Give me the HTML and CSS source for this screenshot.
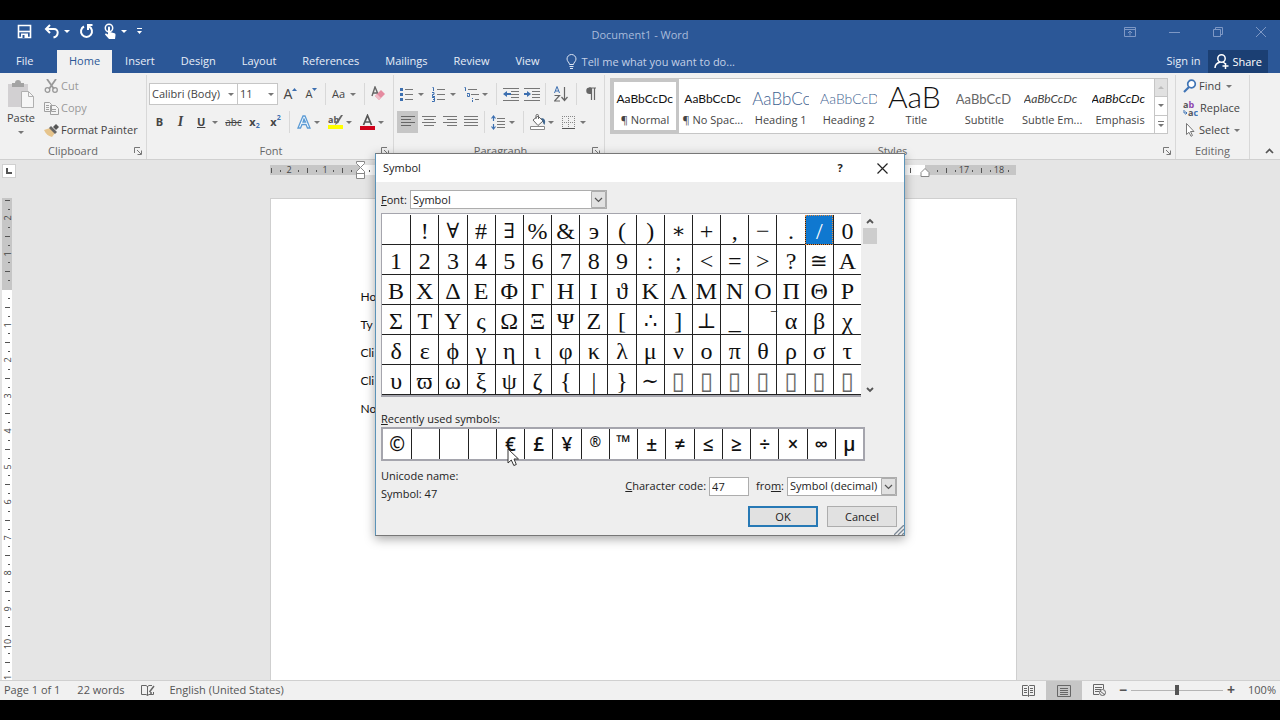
FILE: index.html
```html
<!DOCTYPE html>
<html lang="en">
<head>
  <meta charset="UTF-8" />
  <meta name="viewport" content="width=device-width, initial-scale=1.0"/>
  <title>Document1 - Word</title>
  <link rel="stylesheet" href="styles.css">
</head>
<body>

  <div class="window">
    <header class="titlebar">
      <div class="quick">
        <button class="save" aria-label="Save"><svg width="15" height="15" viewBox="0 0 15 15"><path d="M1.5 1.5h12v12h-12z" fill="none" stroke="#fff" stroke-width="1.6"/><path d="M2 7.5h11" stroke="#fff" stroke-width="1.6"/><path d="M4 9.5h7v4.5H4z" fill="#fff"/><path d="M5.5 11h2v3h-2z" fill="#2b5797"/></svg></button>
        <button class="split" aria-label="Undo"><svg width="16" height="15" viewBox="0 0 16 15"><path d="M6 1L2 5l4 4M2.500 5H10c5 0 5 7-.5 8.500" fill="none" stroke="#fff" stroke-width="2"/></svg><i class="caret"></i></button>
        <button aria-label="Repeat"><svg width="15" height="15" viewBox="0 0 15 15"><path d="M5 2.500a5.500 5.500 0 1 0 5 0" fill="none" stroke="#fff" stroke-width="2"/><path d="M8 1h5.500M9 1v5" fill="none" stroke="#fff" stroke-width="2"/></svg></button>
        <button class="split" aria-label="Touch mode"><svg width="14" height="17" viewBox="0 0 14 17"><circle cx="6" cy="5" r="3.700" fill="none" stroke="#fff" stroke-width="1.500"/><path d="M5 4.500a1 1 0 0 1 2 0V9l4.500 1.200c1 .3 1 1 1 2L12 16H6l-4-4.500c0-1 1-1.500 3 0z" fill="#fff"/></svg><i class="caret"></i></button>
        <button aria-label="Customize toolbar"><svg width="7" height="8" viewBox="0 0 7 8"><path d="M1 1.500h5" stroke="#fff"/><path d="M1 4h5L3.500 7z" fill="#fff"/></svg></button>
      </div>
      <h1>Document1 - Word</h1>
      <div class="controls">
        <button aria-label="Ribbon display options"><svg width="12" height="10" viewBox="0 0 12 10"><path d="M.5.5h11v9H.5zM.5 2.500h11M6 8.500v-4M4 6l2-2 2 2"/></svg></button>
        <button aria-label="Minimize"><svg width="11" height="10" viewBox="0 0 11 10"><path d="M0 5.500h11"/></svg></button>
        <button aria-label="Restore"><svg width="10" height="10" viewBox="0 0 10 10"><path d="M.5 2.500h7v7h-7zM2.500 2.500v-2h7v7h-2"/></svg></button>
        <button aria-label="Close"><svg width="10" height="10" viewBox="0 0 10 10"><path d="M0 0l10 10M10 0L0 10"/></svg></button>
      </div>
    </header>

    <nav class="tabs">
      <a href="#" class="file">File</a>
      <a href="#" class="active">Home</a>
      <a href="#">Insert</a>
      <a href="#">Design</a>
      <a href="#">Layout</a>
      <a href="#">References</a>
      <a href="#">Mailings</a>
      <a href="#">Review</a>
      <a href="#">View</a>
      <a href="#" class="tell"><svg width="11" height="15" viewBox="0 0 11 15"><path d="M3.500 10.500c0-2-2.500-3-2.500-5.500a4.500 4.500 0 0 1 9 0c0 2.500-2.500 3.500-2.500 5.500zM3.500 12.500h4M4 14.500h3" fill="none" stroke="#dce5f3"/></svg>Tell me what you want to do...</a>
      <a href="#" class="signin">Sign in</a>
      <button class="share"><svg width="15" height="15" viewBox="0 0 15 15"><circle cx="7.500" cy="4.500" r="3.700"/><path d="M1 14c0-3.500 2-5 5-6M9 8l2 1.500M11.500 9v6M8.500 12h6"/></svg>Share</button>
    </nav>

    <div class="ribbon">
      <section class="group clipboard">
        <div class="side">
          <button class="paste"><svg width="28" height="30" viewBox="0 0 28 30"><path d="M1 4h20v23H1z" fill="#d2d0d2"/><path d="M5 3h3a3 3 0 0 1 6 0h3v4H5z" fill="#a3a3a3"/><path d="M14.500 11.500h7l5 5v11h-12z" fill="#f6f6f6" stroke="#b0b0b0"/><path d="M21.500 11.500v5h5" fill="none" stroke="#b0b0b0"/></svg>Paste<i class="caret"></i></button>
          <div class="stack">
            <button class="dim"><svg width="15" height="15" viewBox="0 0 15 15"><path d="M3 0l7 10M12 0L5 10" stroke="#999" stroke-width="1.800"/><circle cx="3.500" cy="11" r="2.300" fill="none" stroke="#999" stroke-width="1.300"/><circle cx="11" cy="11" r="2.300" fill="none" stroke="#999" stroke-width="1.300"/></svg>Cut</button>
            <button class="dim"><svg width="15" height="15" viewBox="0 0 15 15"><path d="M.5 1.500h5l2 2v7h-7zM6.500 4.500h5l3 3v6h-8z" fill="#f4f4f4" stroke="#a0a0a0"/><path d="M2 4.500h3M2 6.500h3M2 8.500h3M8 8.500h4M8 10.500h4" stroke="#a0a0a0"/></svg>Copy</button>
            <button><svg width="15" height="15" viewBox="0 0 15 15"><path d="M0 7l6-2 5 5-3 4c-4-1-6-3-8-7z" fill="#e6c48c"/><path d="M5 5l2-2 6 6-2 2z" fill="#666"/><path d="M9 4l3-3 3 3-3 3z" fill="#555"/></svg>Format Painter</button>
          </div>
        </div>
        <h2>Clipboard<button class="launch" aria-label="Clipboard settings"><svg width="8" height="8"><use href="#launch"/></svg></button></h2>
      </section>

      <section class="group font">
        <div class="row">
          <div class="combo family"><select aria-label="Font family"><option>Calibri (Body)</option></select><i class="caret"></i></div>
          <div class="combo size"><select aria-label="Font size"><option>11</option></select><i class="caret"></i></div>
          <button aria-label="Grow font"><span class="grow">A</span><svg width="5" height="12" viewBox="0 0 5 12"><path d="M0 3l2.500-3L5 3z" fill="#3c6fb0"/></svg></button>
          <button aria-label="Shrink font"><span>A</span><svg width="5" height="12" viewBox="0 0 5 12"><path d="M0 0h5L2.500 3z" fill="#3c6fb0"/></svg></button>
          <hr>
          <button class="split" aria-label="Change case"><span>Aa</span><i class="caret"></i></button>
          <hr>
          <button aria-label="Clear formatting"><svg width="15" height="16" viewBox="0 0 15 16"><path d="M1 10l3-9 3 7M2 7h4" fill="none" stroke="#666" stroke-width="1.400"/><path d="M4 10l6-6 4 4-6 6z" fill="#e58ba0"/><path d="M4 10l2-2 4 4-2 2z" fill="#f2bcc8"/></svg></button>
        </div>
        <div class="row">
          <button class="b">B</button>
          <button class="i">I</button>
          <button class="split"><span class="u">U</span><i class="caret"></i></button>
          <button class="strike">abc</button>
          <button class="b">x<sub>2</sub></button>
          <button class="b">x<sup>2</sup></button>
          <hr>
          <button class="split" aria-label="Text effects"><svg width="16" height="16" viewBox="0 0 16 16"><path d="M2 14L7 2h2l5 12h-2.500L10 10.500H6L4.500 14zM7 8h2.500L8 5z" fill="#fff" stroke="#5b9bd5" stroke-width="1.300"/></svg><i class="caret"></i></button>
          <button class="split" aria-label="Highlight color"><svg width="16" height="16" viewBox="0 0 16 16"><path d="M0 11h15v4H0z" fill="#ff0"/><text x="0" y="9" class="tiny">ab</text><path d="M15 1l-5 8-3 2 1-3 5-7z" fill="#666"/></svg><i class="caret"></i></button>
          <button class="split" aria-label="Font color"><svg width="16" height="16" viewBox="0 0 16 16"><path d="M0 12h15v4H0z" fill="#d0021b"/><path d="M3.500 11L7.500 1.500 11.500 11M5 8h5" fill="none" stroke="#555" stroke-width="1.700"/></svg><i class="caret"></i></button>
        </div>
        <h2>Font<button class="launch" aria-label="Font settings"><svg width="8" height="8"><use href="#launch"/></svg></button></h2>
      </section>

      <section class="group paragraph">
        <div class="row">
          <button class="split" aria-label="Bullets"><svg width="14" height="15" viewBox="0 0 14 15"><path d="M5 2.500h8M5 7.500h8M5 12.500h8" stroke="#777"/><path d="M0 1h3v3H0zM0 6h3v3H0zM0 11h3v3H0z" fill="#3c6fb0"/></svg><i class="caret"></i></button>
          <button class="split" aria-label="Numbering"><svg width="14" height="15" viewBox="0 0 14 15"><path d="M5 2.500h8M5 7.500h8M5 12.500h8" stroke="#777"/><path d="M.5.5h1V4M0 5.500h2v2H.5v2H3M0 10.500h2.500v4H0M1 12.500h1" fill="none" stroke="#3c6fb0"/></svg><i class="caret"></i></button>
          <button class="split" aria-label="Multilevel list"><svg width="16" height="15" viewBox="0 0 16 15"><path d="M4 2.500h9M7 7.500h8M11 12.500h4" stroke="#777"/><path d="M.5.5h1V4M3 6.500h2.500v3H3.500v-2M8.500 11v1M8.500 13v2" fill="none" stroke="#3c6fb0"/></svg><i class="caret"></i></button>
          <hr>
          <button aria-label="Decrease indent"><svg width="16" height="14" viewBox="0 0 16 14"><path d="M0 1.500h16M8 4.500h8M8 7.500h8M8 10.500h8M0 13.500h16" stroke="#777"/><path d="M0 7l4-3v2h4v2H4v2z" fill="#3c6fb0"/></svg></button>
          <button aria-label="Increase indent"><svg width="16" height="14" viewBox="0 0 16 14"><path d="M0 1.500h16M8 4.500h8M8 7.500h8M8 10.500h8M0 13.500h16" stroke="#777"/><path d="M7 7L3 4v2H0v2h3v2z" fill="#3c6fb0"/></svg></button>
          <hr>
          <button class="wide" aria-label="Sort"><svg width="14" height="16" viewBox="0 0 14 16"><path d="M.5 7L3 .5 5.500 7M1.500 5h3" fill="none" stroke="#3c6fb0"/><path d="M.5 9.500h5l-5 5.500h5.500M10.500 1v13M7.500 11l3 3.500 3-3.500" fill="none" stroke="#666" stroke-width="1.200"/></svg></button>
          <hr>
          <button aria-label="Show marks"><svg width="10" height="14" viewBox="0 0 10 14"><path d="M5.500 13V1M8.500 13V1M3 1h7" stroke="#666" fill="none" stroke-width="1.200"/><path d="M5 .5H3.500a3 3 0 0 0 0 6.500H5z" fill="#666"/></svg></button>
        </div>
        <div class="row">
          <button class="on" aria-label="Align left"><svg width="14" height="12" viewBox="0 0 14 12"><path d="M0 .5h14M0 3.500h10M0 6.500h14M0 9.500h10" stroke="#666"/></svg></button>
          <button aria-label="Center"><svg width="14" height="12" viewBox="0 0 14 12"><path d="M0 .5h14M2 3.500h10M0 6.500h14M2 9.500h10" stroke="#777"/></svg></button>
          <button aria-label="Align right"><svg width="14" height="12" viewBox="0 0 14 12"><path d="M0 .5h14M4 3.500h10M0 6.500h14M4 9.500h10" stroke="#777"/></svg></button>
          <button aria-label="Justify"><svg width="14" height="12" viewBox="0 0 14 12"><path d="M0 .5h14M0 3.500h14M0 6.500h14M0 9.500h14" stroke="#777"/></svg></button>
          <hr>
          <button class="split" aria-label="Line spacing"><svg width="14" height="15" viewBox="0 0 14 15"><path d="M6 3.500h8M6 6.500h8M6 9.500h8M6 12.500h8" stroke="#777"/><path d="M2.500 1v5M.5 3.500l2-2.500 2 2.500M2.500 9v5M.5 11.500l2 2.500 2-2.500" fill="none" stroke="#3c6fb0" stroke-width="1.200"/></svg><i class="caret"></i></button>
          <hr>
          <button class="split" aria-label="Shading"><svg width="16" height="16" viewBox="0 0 16 16"><path d="M.5 12.500h14v3H.5z" fill="#fff" stroke="#888"/><path d="M3 6l5-4 5 5-5 4.500z" fill="#fff" stroke="#666"/><path d="M6 5V1.500c0-1.500 2.500-1.500 2.500 0V5" fill="none" stroke="#666"/><path d="M11 4c4 0 5 3 3.500 7C13 10 13 8 12.500 7z" fill="#3f668f"/></svg><i class="caret"></i></button>
          <button class="split" aria-label="Borders"><svg width="13" height="13" viewBox="0 0 13 13"><path d="M.5 0v12M12.500 0v12M0 .5h13M6.500 0v12M0 6.500h13" stroke="#888" stroke-dasharray="1 1"/><path d="M0 12.500h13" stroke="#555"/></svg><i class="caret"></i></button>
        </div>
        <h2>Paragraph<button class="launch" aria-label="Paragraph settings"><svg width="8" height="8"><use href="#launch"/></svg></button></h2>
      </section>

      <section class="group styles">
        <div class="gallery">
          <button class="style current"><span class="sample">AaBbCcDc</span><span>¶ Normal</span></button>
          <button class="style"><span class="sample">AaBbCcDc</span><span>¶ No Spac...</span></button>
          <button class="style"><span class="sample h1">AaBbCc</span><span>Heading 1</span></button>
          <button class="style"><span class="sample h2">AaBbCcD</span><span>Heading 2</span></button>
          <button class="style"><span class="sample title">AaB</span><span>Title</span></button>
          <button class="style"><span class="sample subtitle">AaBbCcD</span><span>Subtitle</span></button>
          <button class="style"><span class="sample subtle">AaBbCcDc</span><span>Subtle Em...</span></button>
          <button class="style"><span class="sample emphasis">AaBbCcDc</span><span>Emphasis</span></button>
          <div class="pager">
            <button class="off" aria-label="Previous styles"><i class="caret up"></i></button>
            <button aria-label="Next styles"><i class="caret"></i></button>
            <button class="more" aria-label="More styles"><i class="caret"></i></button>
          </div>
        </div>
        <h2>Styles<button class="launch" aria-label="Styles pane"><svg width="8" height="8"><use href="#launch"/></svg></button></h2>
      </section>

      <section class="group editing">
        <div class="stack">
          <button><svg width="14" height="14" viewBox="0 0 14 14"><circle cx="8.500" cy="5" r="3.800" fill="#fff" stroke="#3f74b5" stroke-width="1.700"/><path d="M6 8l-5 5" stroke="#3f74b5" stroke-width="2.200"/></svg>Find<i class="caret"></i></button>
          <button><svg width="15" height="15" viewBox="0 0 15 15"><text x="0" y="7" class="tiny">a<tspan class="purple">b</tspan></text><text x="5" y="15" class="tiny">a<tspan class="blue">c</tspan></text><path d="M1 9v3h3M2.500 10.500L4 12l-1.500 1.500" fill="none" stroke="#3f74b5"/></svg>Replace</button>
          <button><svg width="14" height="14" viewBox="0 0 14 14"><path d="M3.500.5v11l2.500-2.200 2 4 1.500-.8-2-4H11z" fill="#fff" stroke="#777"/></svg>Select<i class="caret"></i></button>
        </div>
        <h2>Editing</h2>
      </section>
      <button class="collapse" aria-label="Collapse the ribbon"><svg width="9" height="6" viewBox="0 0 9 6"><path d="M1 5l3.500-3.500L8 5" fill="none" stroke="#555" stroke-width="1.700"/></svg></button>
    </div>

    <main class="workspace">
      <div class="topruler">
        <button class="tabstop" aria-label="Tab stop"><svg width="7" height="6" viewBox="0 0 7 6"><path d="M1 0v5h5" fill="none" stroke="#555" stroke-width="2"/></svg></button>
        <svg class="hruler" id="hruler" width="746" height="18"></svg>
      </div>
      <div class="editor">
        <svg class="vruler" id="vruler" width="10"></svg>
        <article class="page">
          <p>Ho</p>
          <p>Ty</p>
          <p>Cli</p>
          <p>Cli</p>
          <p>No</p>
        </article>
      </div>
    </main>

    <footer class="status">
      <span>Page 1 of 1</span>
      <span>22 words</span>
      <button aria-label="Proofing"><svg width="14" height="13" viewBox="0 0 14 13"><path d="M6.500 11.500L5 10.500H.5v-9H5l1.500 1 1.500-1h3M6.500 2v9.500l1.500-1h4.500V8" fill="none" stroke="#666"/><path d="M13 2L8.500 8M9 9h2" stroke="#666" stroke-width="1.500"/></svg></button>
      <span>English (United States)</span>
      <div class="views">
        <button aria-label="Read mode"><svg width="13" height="12" viewBox="0 0 13 12"><path d="M6.500 11.500V1.500l-1-1h-5v10h5l1 1 1-1h5V.5h-5l-1 1M2 3.500h3M2 5.500h3M2 7.500h3M8 3.500h3M8 5.500h3M8 7.500h3" fill="none" stroke="#666"/></svg></button>
        <button class="on" aria-label="Print layout"><svg width="14" height="12" viewBox="0 0 14 12"><path d="M.5.5h13v11H.5zM3 3.500h8M3 5.500h8M3 7.500h8M3 9.500h8" fill="none" stroke="#666"/></svg></button>
        <button aria-label="Web layout"><svg width="14" height="13" viewBox="0 0 14 13"><path d="M6 10.500H.5V.5h10V5M2 3.500h7M2 5.500h6M2 7.500h4" fill="none" stroke="#666"/><circle cx="9.500" cy="8.500" r="3" fill="#eee" stroke="#666"/><path d="M7 7l5 4" stroke="#666"/></svg></button>
      </div>
      <div class="zoom">
        <button aria-label="Zoom out">−</button>
        <input type="range" min="10" max="190" value="100" aria-label="Zoom">
        <button aria-label="Zoom in">+</button>
      </div>
      <span class="percent">100%</span>
    </footer>

    <div class="dialog" role="dialog" aria-labelledby="dialogTitle">
      <div class="dialog-title">
        <h2 id="dialogTitle">Symbol</h2>
        <button aria-label="Help">?</button>
        <button aria-label="Close dialog"><svg width="11" height="11" viewBox="0 0 11 11"><path d="M.5.5l10 10M10.500.5l-10 10" stroke="#222" stroke-width="1.200"/></svg></button>
      </div>
      <div class="dialog-body">
        <div class="field">
          <label for="symbolFont"><u>F</u>ont:</label>
          <div class="picker fontpick"><select id="symbolFont"><option>Symbol</option></select><svg width="15" height="17" viewBox="0 0 15 17"><use href="#drop"/></svg></div>
        </div>
        <div class="symbols">
          <div class="grid" id="symbolGrid"></div>
          <div class="scroll">
            <button aria-label="Scroll up"><svg width="8" height="6" viewBox="0 0 8 6"><path d="M1 5l3-3 3 3" fill="none" stroke="#555" stroke-width="1.800"/></svg></button>
            <div class="thumb"></div>
            <button aria-label="Scroll down"><svg width="8" height="6" viewBox="0 0 8 6"><path d="M1 1l3 3 3-3" fill="none" stroke="#555" stroke-width="1.800"/></svg></button>
          </div>
        </div>
        <p class="recent-label"><u>R</u>ecently used symbols:</p>
        <div class="recent" id="recentGrid"></div>
        <div class="details">
          <div class="names">
            <p>Unicode name:</p>
            <p>Symbol: 47</p>
          </div>
          <div class="field">
            <label for="charCode"><u>C</u>haracter code:</label>
            <input type="text" id="charCode" value="47">
            <label for="charFrom" class="from">fro<u>m</u>:</label>
            <div class="picker frompick"><select id="charFrom"><option>Symbol (decimal)</option></select><svg width="15" height="17" viewBox="0 0 15 17"><use href="#drop"/></svg></div>
          </div>
        </div>
        <div class="actions">
          <button class="default">OK</button>
          <button>Cancel</button>
        </div>
      </div>
      <svg class="grip" width="10" height="10" viewBox="0 0 10 10"><path d="M0 10L10 0M4 10l6-6M8 10l2-2" stroke="#7b8794" stroke-width="1.300"/></svg>
      <svg class="pointer" width="13" height="19" viewBox="0 0 13 19"><path d="M1 1v14l3.300-3 2.500 5.500 2.500-1L7 11h4.500z" fill="#fff" stroke="#333"/></svg>
    </div>
  </div>

  <!-- shared shapes -->
  <svg class="defs" width="0" height="0">
    <symbol id="launch" viewBox="0 0 8 8"><path d="M.5 6V.5H6M3 3l4 4M7.500 3.500v4h-4" fill="none" stroke="#777"/></symbol>
    <symbol id="drop" viewBox="0 0 15 17"><path d="M.5.5h14v16H.5z" fill="#e1e1e1" stroke="#adadad"/><path d="M4 7l3.500 3.500L11 7" fill="none" stroke="#555" stroke-width="1.200"/></symbol>
  </svg>

  <script>
    const rows = [
      " !∀#∃%&э()∗+,−./0",
      "123456789:;<=>?≅Α",
      "ΒΧΔΕΦΓΗΙϑΚΛΜΝΟΠΘΡ",
      "ΣΤΥςΩΞΨΖ[∴]⊥_‾αβχ",
      "δεϕγηιφκλμνοπθρστ",
      "υϖωξψζ{|}∼▯▯▯▯▯▯▯"
    ];
    const recent = ["©", " ", " ", " ", "€", "£", "¥", "®", "™", "±", "≠", "≤", "≥", "÷", "×", "∞", "µ"];

    function addCell(parent, char) {
      const cell = document.createElement('button');
      cell.textContent = char;
      if (char === ' ') cell.setAttribute('aria-label', 'Space');
      if (char === '/') cell.className = 'selected';
      if (char === '‾') cell.className = 'over';
      if ('∀∃∗∴⊥≅∼'.includes(char)) cell.className = 'math';
      if ('®™'.includes(char)) cell.className = 'mark';
      if (char === '▯') cell.className = 'blank';
      parent.appendChild(cell);
    }

    rows.forEach(row => [...row].forEach(c => addCell(document.getElementById('symbolGrid'), c)));
    recent.forEach(c => addCell(document.getElementById('recentGrid'), c));

    // Ruler marks: a number every centimetre, a bar at the half, dots at the quarters
    function drawRuler(id, zero, length, margin, end, vertical) {
      const cm = 35.5;
      let out = vertical
        ? `<rect width="10" height="${length}" fill="#fff"/><rect width="10" height="${margin}" fill="#c6c6c6"/>`
        : `<rect y="4" width="${length}" height="10" fill="#fff"/><rect y="4" width="${margin}" height="10" fill="#c6c6c6"/><rect x="${end}" y="4" width="${length - end}" height="10" fill="#c6c6c6"/>`;
      for (let q = -10; q < 80; q++) {
        const pos = Math.round(zero + q * cm / 4);
        if (pos < 1 || pos > length - 2 || q === 0) continue;
        // the right indent marker sits here
        if (!vertical && Math.abs(pos - end) < 7) continue;
        const size = q % 2 ? 1 : 4;
        if (q % 4 === 0) {
          const n = Math.abs(q / 4);
          out += vertical
            ? `<text transform="translate(9 ${pos}) rotate(-90)">${n}</text>`
            : `<text x="${pos}" y="12">${n}</text>`;
        } else {
          out += vertical
            ? `<rect x="${7 - size}" y="${pos}" width="${size + 1}" height="1" fill="#555"/>`
            : `<rect x="${pos}" y="${q % 2 ? 9 : 7}" width="1" height="${size + 1}" fill="#555"/>`;
        }
      }
      if (!vertical) {
        out += `<path d="M86.500.5h8v2l-4 4 4 4v7h-8v-7l4-4-4-4zM86.500 12.500h8" fill="#fff" stroke="#888"/>
                <path d="M${end - 4} 15.500v-4l4-4 4 4v4z" fill="#fff" stroke="#888"/>`;
      }
      document.getElementById(id).innerHTML = out;
    }

    drawRuler('hruler', 90, 746, 90, 655, false);
    drawRuler('vruler', 91, 1200, 92, 0, true);
  </script>

</body>
</html>
```

FILE: styles.css
```css
* {
  box-sizing: border-box;
}

body {
  margin: 0;
  background-color: #000;
  color: #444;
  font-family: "Open Sans", "Noto Sans", sans-serif;
  font-size: 11px;
  line-height: 16px;
}

h1, h2, p {
  margin: 0;
  font-size: 11px;
  font-weight: normal;
}

button, input, select {
  font: inherit;
  color: inherit;
  margin: 0;
  padding: 0;
  border: none;
  background: none;
}

svg {
  display: block;
  flex: none;
}

.defs {
  position: absolute;
}

.window {
  position: relative;
  display: flex;
  flex-direction: column;
  height: calc(100vh - 40px);
  margin: 20px 0;
  background-color: #e5e5e5;
  overflow: hidden;
}

.caret {
  flex: none;
  width: 5px;
  border: solid transparent;
  border-width: 3px 3px 0;
  border-top-color: #777;
}

.caret.up {
  border-width: 0 3px 3px;
  border-bottom-color: #bbb;
}

.tiny {
  font-size: 9px;
  font-weight: bold;
  fill: #555;
}

.purple {
  fill: #8e44ad;
}

.blue {
  fill: #3f74b5;
}

/* Title bar */
.titlebar {
  display: grid;
  grid-template-columns: 1fr auto 1fr;
  align-items: center;
  height: 30px;
  background-color: #2b5797;
}

.titlebar .caret {
  border-top-color: #fff;
}

.titlebar h1 {
  color: #a9bbda;
}

.quick {
  display: flex;
  align-items: center;
  padding: 0 0 8px 17px;
  gap: 9px;
}

.quick .save {
  margin-right: 3px;
}

.quick .split {
  gap: 4px;
}

.quick button {
  display: flex;
  align-items: center;
}

.controls {
  display: flex;
  justify-content: flex-end;
  gap: 33px;
  padding: 0 14px 7px 0;
}

.controls svg {
  fill: none;
  stroke: #7e98c5;
}

/* Tabs */
.tabs {
  display: flex;
  height: 23px;
  background-color: #2b5797;
}

.tabs a {
  color: #e8eef7;
  text-decoration: none;
  line-height: 22px;
  padding: 0 13px;
}

.tabs .file {
  width: 57px;
  padding: 0 0 0 16px;
}

.tabs .active {
  padding: 0 12px;
  background-color: #f1f1f1;
  color: #2b5797;
}

.tabs .tell {
  display: flex;
  align-items: center;
  gap: 5px;
  color: #c3d0e6;
}

.tabs .signin {
  margin-left: auto;
  padding: 0 8px;
}

.share {
  display: flex;
  align-items: center;
  gap: 3px;
  margin-right: 12px;
  padding: 0 6px;
  color: #fff;
  background-color: #1b3f73;
}

.share svg {
  fill: none;
  stroke: #fff;
  stroke-width: 1.5;
}

/* Ribbon */
.ribbon {
  display: flex;
  height: 87px;
  padding: 2px 0 0;
  background-color: #f1f1f1;
  border-bottom: 1px solid #d0d0d0;
}

.group {
  display: flex;
  flex-direction: column;
  border-right: 1px solid #d8d8d8;
}

.group h2 {
  display: flex;
  margin-top: auto;
  height: 16px;
  justify-content: center;
  align-items: center;
  color: #666;
}

.launch {
  width: 0;
  margin-left: auto;
  direction: rtl;
}

.group h2:has(.launch)::before {
  content: "";
  margin-right: auto;
}

.launch svg {
  margin-right: 4px;
}

.clipboard {
  width: 147px;
}

.side {
  display: flex;
}

.paste {
  display: flex;
  flex-direction: column;
  align-items: center;
  width: 42px;
  padding-top: 5px;
}

.paste .caret {
  margin-top: 5px;
}

.stack button {
  display: flex;
  align-items: center;
  gap: 2px;
  height: 22px;
  padding-left: 2px;
  white-space: nowrap;
}

.stack .dim {
  color: #999;
}

.row {
  display: flex;
  margin-bottom: 6px;
  height: 22px;
}

.row:first-child {
  margin-top: 8px;
}

.row hr {
  width: 1px;
  margin: 0 3px;
  border: none;
  background-color: #d8d8d8;
}

.row button {
  display: flex;
  align-items: center;
  justify-content: center;
  flex: none;
  width: 21px;
}

.row .split {
  width: 32px;
  justify-content: space-between;
  padding: 0 5px 0 3px;
}

.row .wide {
  width: 24px;
}

.row .on {
  background-color: #c6c6c6;
}

.row .b {
  font-weight: bold;
}

.row .i {
  font: italic bold 14px "Liberation Serif", serif;
}

.row .u {
  font-weight: bold;
  text-decoration: underline;
  padding-left: 3px;
}

.row .strike {
  font-size: 10px;
  text-decoration: line-through;
}

.row sub, .row sup {
  font-size: 7px;
  line-height: 8px;
  color: #3c6fb0;
}

.row sub {
  padding-top: 8px;
}

.row sup {
  padding-bottom: 8px;
}

.grow {
  font-size: 14px;
}

.font {
  width: 247px;
  padding-left: 2px;
}

.combo {
  display: grid;
  align-items: center;
  background-color: #fff;
  border: 1px solid #c6c6c6;
}

.combo select, .combo .caret {
  grid-area: 1 / 1;
}

.combo .caret {
  justify-self: end;
  margin-right: 3px;
}

.combo select, .picker select {
  appearance: none;
  width: 100%;
  padding-left: 2px;
  outline: none;
}

.family {
  width: 89px;
}

.size {
  width: 40px;
  border-left: none;
  margin-right: 2px;
}

.paragraph {
  width: 211px;
  padding-left: 3px;
}

.styles {
  flex: 1;
  min-width: 0;
  padding-left: 5px;
}

.gallery {
  display: flex;
  height: 56px;
  margin: 3px 7px 0 0;
  background-color: #fff;
  border: 1px solid #c6c6c6;
}

.style {
  display: flex;
  flex: 1;
  flex-direction: column;
  align-items: center;
  justify-content: flex-end;
  min-width: 0;
  padding: 2px;
  border: 3px solid transparent;
  white-space: nowrap;
}

.style.current {
  border-color: #c6c6c6;
}

.sample {
  width: 57px;
  height: 30px;
  line-height: 30px;
  overflow: hidden;
  text-align: left;
  color: #111;
  font-family: Lato, sans-serif;
  font-size: 12px;
}

.h1, .h2 {
  color: #3f6391;
}

.h1 {
  font-size: 17px;
  font-weight: 300;
}

.h2 {
  font-size: 14px;
  font-weight: 300;
}

.title {
  font-size: 30px;
  font-weight: 300;
  line-height: 24px;
}

.subtitle {
  color: #666;
  font-size: 13px;
}

.subtle, .emphasis {
  font-style: italic;
}

.subtle {
  color: #444;
}

.pager {
  display: flex;
  flex-direction: column;
  width: 13px;
  border-left: 1px solid #c6c6c6;
}

.pager button {
  display: flex;
  flex: 1;
  flex-direction: column;
  align-items: center;
  justify-content: center;
}

.pager button + button {
  border-top: 1px solid #c6c6c6;
}

.pager .off {
  background-color: #e1e1e1;
}

.pager .more::before {
  content: "";
  width: 6px;
  margin-bottom: 2px;
  border-top: 1px solid #777;
}

.editing {
  width: 74px;
}

.editing .stack {
  padding-left: 5px;
}

.editing .caret {
  margin-left: 3px;
}

.collapse {
  align-self: flex-end;
  width: 30px;
  height: 16px;
  padding: 0 0 0 15px;
}

/* Rulers and page */
.workspace {
  display: flex;
  flex: 1;
  flex-direction: column;
  min-height: 0;
}

.topruler {
  display: flex;
  padding: 1px 10px 0 2px;
}

.tabstop {
  display: flex;
  align-items: center;
  justify-content: center;
  width: 14px;
  height: 14px;
  margin-top: 3px;
  background-color: #fff;
  border: 1px solid #d0d0d0;
}

.hruler {
  margin: 0 auto;
  font-size: 9px;
  text-anchor: middle;
  fill: #444;
}

.vruler {
  height: 100%;
  font-size: 9px;
  text-anchor: middle;
  fill: #444;
}

.editor {
  display: flex;
  flex: 1;
  min-height: 0;
  padding: 19px 6px 0 2px;
}

.page {
  width: 747px;
  height: 100%;
  margin: 0 auto;
  padding: 84px 90px 0;
  background-color: #fff;
  border: 1px solid #cfcfcf;
  border-bottom: none;
  font: 12px/28px Lato, sans-serif;
  color: #111;
}

.page p {
  font-size: 12px;
}

/* Status bar */
.status {
  display: flex;
  align-items: center;
  gap: 17px;
  height: 20px;
  padding: 0 4px 1px;
  background-color: #f1f1f1;
  border-top: 1px solid #d0d0d0;
  color: #555;
}

.status button + span {
  margin-left: -3px;
}

.views {
  display: flex;
  align-self: stretch;
  margin: 0 -16px -1px auto;
}

.views button {
  display: flex;
  align-items: center;
  justify-content: center;
  width: 36px;
}

.views .on {
  background-color: #c6c6c6;
}

.zoom {
  display: flex;
  align-items: center;
  gap: 4px;
}

.zoom button {
  width: 8px;
  font-size: 14px;
  font-weight: bold;
}

.zoom input {
  appearance: none;
  width: 92px;
  height: 10px;
  background: linear-gradient(#b5b5b5, #b5b5b5) center / 100% 1px no-repeat;
}

.zoom input::-webkit-slider-thumb {
  appearance: none;
  width: 4px;
  height: 10px;
  background-color: #555;
}

.percent {
  margin-left: -4px;
}

/* Symbol dialog */
.dialog {
  position: absolute;
  top: 133px;
  left: 50%;
  width: 530px;
  transform: translateX(-50%);
  background-color: #eee;
  border: 1px solid #5b93b8;
  border-top-color: #777;
  border-bottom-color: #777;
  box-shadow: 0 3px 10px rgba(0,0,0,0.35);
  color: #222;
}

.dialog-title {
  display: flex;
  align-items: center;
  height: 28px;
  padding: 0 1px 0 7px;
  background-color: #fff;
}

.dialog-title h2 {
  margin-right: auto;
}

.dialog-title button {
  display: flex;
  align-items: center;
  justify-content: center;
  width: 42px;
  height: 28px;
  font-weight: bold;
}

.dialog-body {
  padding: 8px 7px 8px 5px;
}

.field {
  display: flex;
  align-items: center;
  gap: 3px;
}

.picker {
  display: grid;
  align-items: center;
  background-color: #fff;
  border: 1px solid #adadad;
}

.picker select, .picker svg {
  grid-area: 1 / 1;
}

.picker svg {
  justify-self: end;
}

.picker select {
  height: 17px;
}

.fontpick {
  width: 197px;
}

.frompick {
  width: 110px;
}

.symbols {
  display: flex;
  margin-top: 4px;
}

.grid, .recent {
  display: grid;
  grid-template-columns: repeat(17, 1fr);
  background-color: #fff;
  border: 1px solid #a5a5ad;
}

.grid {
  width: 480px;
  grid-auto-rows: 30px;
  padding: 1px 0 0;
  border-right: none;
  border-bottom: 2px solid #a5a5ad;
}

.grid button {
  min-width: 0;
  padding-top: 4px;
  border: solid #222;
  border-width: 0 0 1px 1px;
  font: 24px/25px "Liberation Serif", "DejaVu Serif", serif;
  color: #111;
}

.grid button:nth-child(17n + 1) {
  border-left: none;
}

.grid .math {
  font-size: 21px;
}

.grid .blank {
  font-size: 24px;
  font-family: "DejaVu Sans", sans-serif;
  color: #666;
}

.grid .over {
  padding: 0;
  text-align: right;
  font-size: 16px;
}

.grid .selected {
  background-color: #0f78d0;
  color: #fff;
  outline: 1px dotted #e38b40;
  outline-offset: -1px;
}

.scroll {
  display: flex;
  flex-direction: column;
  align-items: center;
  width: 18px;
}

.scroll button {
  display: flex;
  align-items: center;
  justify-content: center;
  width: 15px;
  height: 15px;
}

.scroll button:last-child {
  margin-top: auto;
}

.thumb {
  width: 14px;
  height: 16px;
  background-color: #cdcdcd;
}

.recent-label {
  margin-top: 14px;
}

.recent {
  width: 484px;
  height: 34px;
  border-width: 2px;
}

.recent button {
  min-width: 0;
  border-left: 1px solid #222;
  font-size: 19px;
  font-weight: 600;
  color: #111;
}

.recent button:first-child {
  border-left: none;
}

.recent .mark {
  padding-bottom: 4px;
}

.recent .mark:nth-child(8) {
  font-size: 14px;
}

.details {
  display: flex;
  justify-content: space-between;
  margin-top: 7px;
}

.names p + p {
  margin-top: 2px;
}

.details .field {
  height: 36px;
}

.details input {
  width: 40px;
  height: 19px;
  padding-left: 2px;
  background-color: #fff;
  border: 1px solid #adadad;
}

.from {
  margin-left: 4px;
}

.actions {
  display: flex;
  justify-content: flex-end;
  gap: 9px;
  margin-top: 2px;
}

.actions button {
  width: 70px;
  height: 21px;
  background-color: #e1e1e1;
  border: 1px solid #adadad;
}

.actions .default {
  border: 2px solid #2779b5;
}

.grip {
  position: absolute;
  right: 0;
  bottom: 0;
}

.pointer {
  position: absolute;
  left: 131px;
  top: 294px;
}
```
